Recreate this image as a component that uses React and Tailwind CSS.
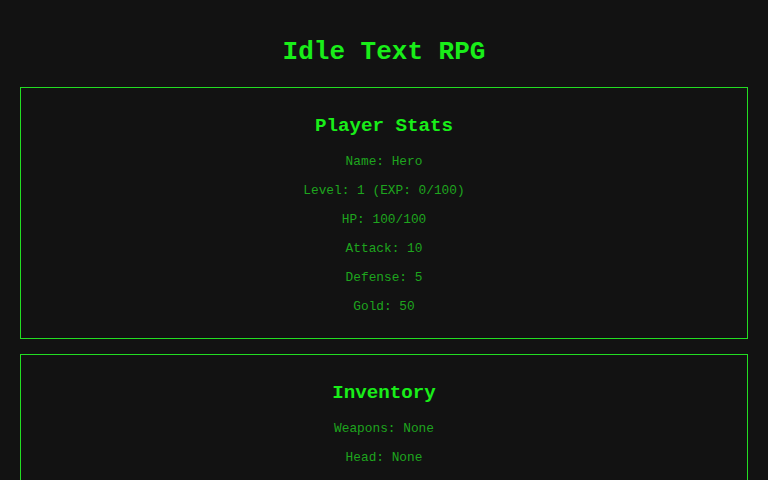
const player = {
  name: "Hero",
  level: 1,
  exp: 0,
  expNext: 100,
  hp: 100,
  maxHp: 100,
  attack: 10,
  defense: 5,
  gold: 50,
};

const inventory = [
  { slot: "Weapons", item: "None" },
  { slot: "Head", item: "None" },
];

function Panel({ title, children }) {
  return (
    <section className="border border-[#22dd22] pt-[26px] pb-[23px] mb-[15px]">
      <h2 className="text-center text-[19.2px] leading-[24px] font-bold text-[#19ee19] mb-4">{title}</h2>
      <div className="flex flex-col gap-[13px]">{children}</div>
    </section>
  );
}

function Line({ children }) {
  return <p className="text-center text-[12.8px] leading-[16px] text-[#1ea51e]">{children}</p>;
}

export default function App() {
  return (
    <main
      className="min-h-screen bg-[#121212] px-5 pt-[37px]"
      style={{ fontFamily: "'Liberation Mono', 'Courier New', monospace" }}
    >
      <h1 className="text-center text-[26px] leading-[30px] font-bold text-[#19ee19] mb-5">Idle Text RPG</h1>

      <Panel title="Player Stats">
        <Line>Name: {player.name}</Line>
        <Line>
          Level: {player.level} (EXP: {player.exp}/{player.expNext})
        </Line>
        <Line>
          HP: {player.hp}/{player.maxHp}
        </Line>
        <Line>Attack: {player.attack}</Line>
        <Line>Defense: {player.defense}</Line>
        <Line>Gold: {player.gold}</Line>
      </Panel>

      <Panel title="Inventory">
        {inventory.map((s) => (
          <Line key={s.slot}>
            {s.slot}: {s.item}
          </Line>
        ))}
      </Panel>
    </main>
  );
}
